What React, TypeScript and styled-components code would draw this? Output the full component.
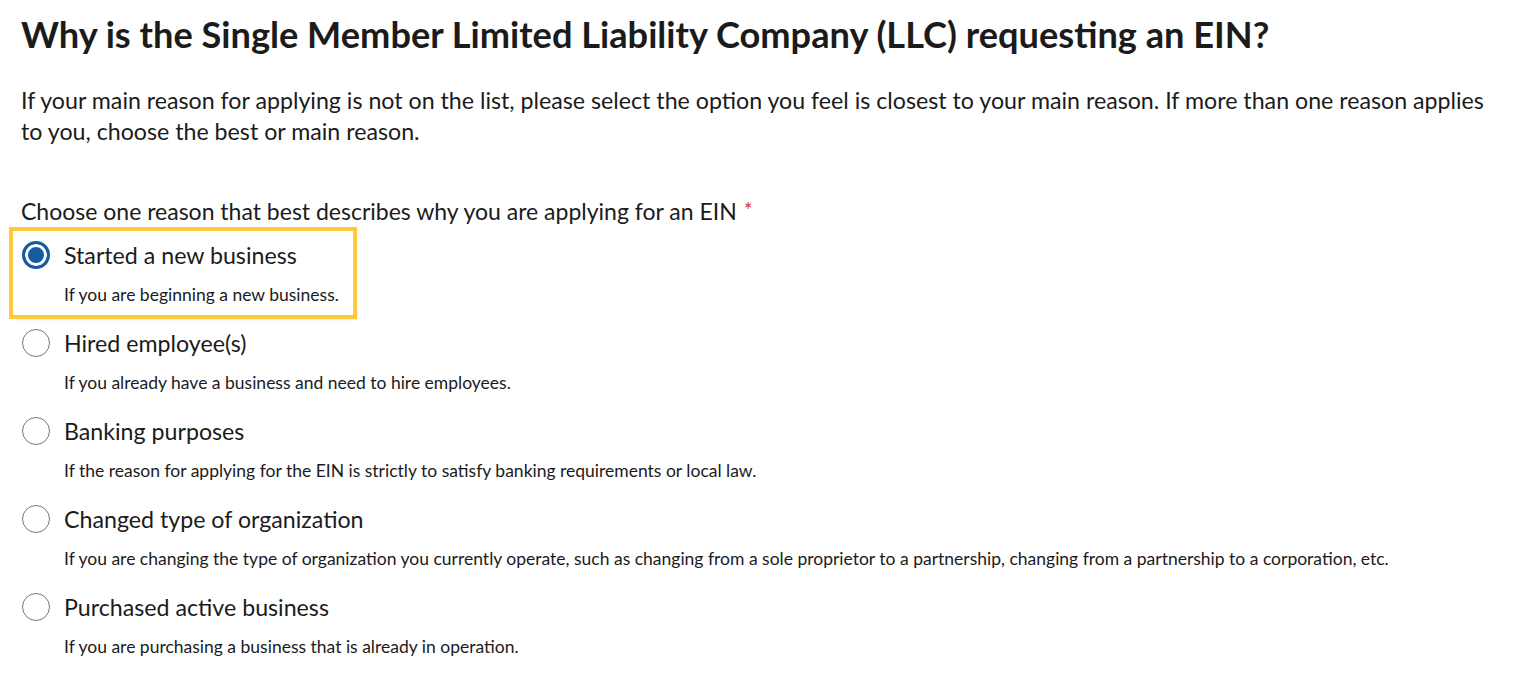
import React, { useState } from "react";
import styled, { createGlobalStyle } from "styled-components";

const GlobalStyle = createGlobalStyle`
  html, body {
    margin: 0;
    padding: 0;
    background: #ffffff;
  }
  body {
    font-family: Lato, "Noto Sans", "Liberation Sans", sans-serif;
    color: #1b1b1b;
  }
`;

type Reason = {
  id: string;
  label: string;
  hint: string;
};

const reasons: Reason[] = [
  { id: "new", label: "Started a new business", hint: "If you are beginning a new business." },
  { id: "hired", label: "Hired employee(s)", hint: "If you already have a business and need to hire employees." },
  {
    id: "banking",
    label: "Banking purposes",
    hint: "If the reason for applying for the EIN is strictly to satisfy banking requirements or local law.",
  },
  {
    id: "changed",
    label: "Changed type of organization",
    hint: "If you are changing the type of organization you currently operate, such as changing from a sole proprietor to a partnership, changing from a partnership to a corporation, etc.",
  },
  { id: "purchased", label: "Purchased active business", hint: "If you are purchasing a business that is already in operation." },
];

export default function App() {
  const [selected, setSelected] = useState("new");

  return (
    <>
      <GlobalStyle />
      <Page>
        <Heading>Why is the Single Member Limited Liability Company (LLC) requesting an EIN?</Heading>
        <Intro>
          If your main reason for applying is not on the list, please select the option you feel is closest to your
          main reason. If more than one reason applies to you, choose the best or main reason.
        </Intro>
        <Fieldset>
          <Legend>
            Choose one reason that best describes why you are applying for an EIN <Required>*</Required>
          </Legend>
          <OptionList>
            {reasons.map((r) => (
              <Option key={r.id} $highlight={selected === r.id} onClick={() => setSelected(r.id)}>
                <OptionRow>
                  <Radio $checked={selected === r.id} />
                  <OptionLabel>{r.label}</OptionLabel>
                </OptionRow>
                <Hint>{r.hint}</Hint>
              </Option>
            ))}
          </OptionList>
        </Fieldset>
      </Page>
    </>
  );
}

const Page = styled.main`
  padding: 12px 30px 0 21px;
  max-width: 1480px;
`;

const Heading = styled.h1`
  margin: 0;
  font-size: 36.2px;
  line-height: 44px;
  font-weight: 700;
  color: #1b1b1b;
`;

const Intro = styled.p`
  margin: 29px 0 0 0;
  font-size: 23.2px;
  line-height: 31px;
  color: #1b1b1b;
`;

const Fieldset = styled.fieldset`
  border: none;
  margin: 49px 0 0 -10px;
  padding: 0;
`;

const Legend = styled.legend`
  padding: 0 0 0 10px;
  font-size: 23px;
  line-height: 31px;
  color: #1b1b1b;
`;

const Required = styled.span`
  color: #d83933;
  font-size: 21px;
  line-height: 17px;
  vertical-align: 2px;
  margin-left: 1px;
`;

const OptionList = styled.div`
  display: flex;
  flex-direction: column;
  margin-top: 2px;
`;

const Option = styled.div<{ $highlight: boolean }>`
  box-sizing: border-box;
  display: flex;
  flex-direction: column;
  width: fit-content;
  height: 88px;
  padding: 0 16px 0 11px;
  outline: ${(p) => (p.$highlight ? "4px solid #fdc93d" : "none")};
  outline-offset: -2px;
  box-shadow: ${(p) => (p.$highlight ? "2px 3px 3px -1px rgba(0,0,0,0.12)" : "none")};
  cursor: pointer;
`;

const OptionRow = styled.div`
  display: flex;
  align-items: center;
  height: 52px;
  gap: 14px;
`;

const Radio = styled.span<{ $checked: boolean }>`
  box-sizing: border-box;
  width: 28px;
  height: 28px;
  border-radius: 50%;
  flex-shrink: 0;
  border: ${(p) => (p.$checked ? "3px solid #155ca3" : "1.5px solid #757575")};
  background: ${(p) => (p.$checked ? "#155ca3" : "#ffffff")};
  box-shadow: ${(p) => (p.$checked ? "inset 0 0 0 3px #ffffff" : "none")};
`;

const OptionLabel = styled.span`
  font-size: 23.2px;
  line-height: 28px;
  color: #1b1b1b;
`;

const Hint = styled.div`
  margin-top: 2px;
  padding-left: 42px;
  font-size: 17.5px;
  line-height: 24px;
  color: #1b1b1b;
`;
